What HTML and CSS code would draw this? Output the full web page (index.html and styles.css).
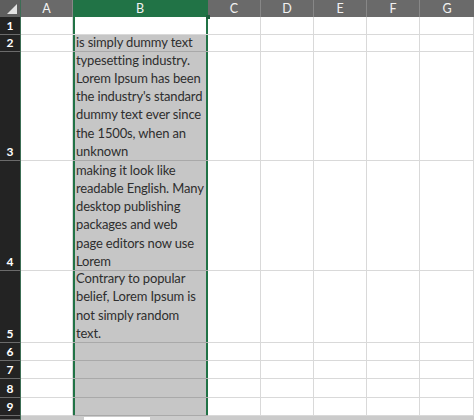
FILE: index.html
```html
<!DOCTYPE html>
<html>
<head>
<meta charset="utf-8">
<link rel="stylesheet" href="styles.css">
</head>
<body>
<div class="sheet">
  <div class="corner"><span class="tri"></span></div>
  <div class="colhead">A</div>
  <div class="colhead sel">B</div>
  <div class="colhead">C</div>
  <div class="colhead">D</div>
  <div class="colhead">E</div>
  <div class="colhead">F</div>
  <div class="colhead last">G</div>

  <div class="rowhead">1</div>
  <div class="cell"></div>
  <div class="cell b active"><span class="handle"></span></div>
  <div class="cell"></div><div class="cell"></div><div class="cell"></div><div class="cell"></div><div class="cell"></div>

  <div class="rowhead">2</div>
  <div class="cell"></div>
  <div class="cell b">is simply dummy text</div>
  <div class="cell"></div><div class="cell"></div><div class="cell"></div><div class="cell"></div><div class="cell"></div>

  <div class="rowhead">3</div>
  <div class="cell"></div>
  <div class="cell b">typesetting industry.<br>Lorem Ipsum has been<br>the industry's standard<br>dummy text ever since<br>the 1500s, when an<br>unknown</div>
  <div class="cell"></div><div class="cell"></div><div class="cell"></div><div class="cell"></div><div class="cell"></div>

  <div class="rowhead">4</div>
  <div class="cell"></div>
  <div class="cell b">making it look like<br>readable English. Many<br>desktop publishing<br>packages and web<br>page editors now use<br>Lorem</div>
  <div class="cell"></div><div class="cell"></div><div class="cell"></div><div class="cell"></div><div class="cell"></div>

  <div class="rowhead">5</div>
  <div class="cell"></div>
  <div class="cell b">Contrary to popular<br>belief, Lorem Ipsum is<br>not simply random<br>text.</div>
  <div class="cell"></div><div class="cell"></div><div class="cell"></div><div class="cell"></div><div class="cell"></div>

  <div class="rowhead">6</div>
  <div class="cell"></div><div class="cell b"></div>
  <div class="cell"></div><div class="cell"></div><div class="cell"></div><div class="cell"></div><div class="cell"></div>

  <div class="rowhead">7</div>
  <div class="cell"></div><div class="cell b"></div>
  <div class="cell"></div><div class="cell"></div><div class="cell"></div><div class="cell"></div><div class="cell"></div>

  <div class="rowhead">8</div>
  <div class="cell"></div><div class="cell b"></div>
  <div class="cell"></div><div class="cell"></div><div class="cell"></div><div class="cell"></div><div class="cell"></div>

  <div class="rowhead">9</div>
  <div class="cell"></div><div class="cell b"></div>
  <div class="cell"></div><div class="cell"></div><div class="cell"></div><div class="cell"></div><div class="cell"></div>

  <div class="rowhead"></div>
  <div class="scrollbar"><span class="thumb"></span></div>
</div>
</body>
</html>
```
FILE: styles.css
```css
html, body {
  margin: 0;
  padding: 0;
  background: #ffffff;
}

.sheet {
  display: grid;
  width: 474px;
  height: 420px;
  grid-template-columns: 21px 52px 135px 53px 53px 53px 53px 1fr;
  grid-template-rows: 17px 18px 17px 109px 110px 72px 18px 18px 19px 18px 1fr;
  font-family: Lato, "Open Sans", sans-serif;
  overflow: hidden;
}

.corner {
  background: #5e5e5e;
  border-right: 1px solid #3c6e55;
  position: relative;
}

.tri {
  position: absolute;
  right: 3px;
  bottom: 3px;
  width: 0;
  height: 0;
  border-left: 10px solid transparent;
  border-bottom: 10px solid #e2e2e2;
}

.colhead {
  background: #6a6a6a;
  color: #f2f2f2;
  font-size: 12.5px;
  display: flex;
  align-items: center;
  justify-content: center;
  border-right: 1px solid #878787;
  box-sizing: border-box;
}

.colhead.sel {
  background: #217346;
  border-right-color: #217346;
}

.colhead.last {
  border-right: none;
}

.rowhead {
  background: #232323;
  color: #ffffff;
  font-size: 12px;
  font-weight: bold;
  display: flex;
  align-items: flex-end;
  justify-content: center;
  padding-bottom: 1px;
  box-sizing: border-box;
  border-bottom: 1px solid #6b6b6b;
  border-right: 1px solid #3c6e55;
}

.cell {
  box-sizing: border-box;
  border-right: 1px solid #d9d9d9;
  border-bottom: 1px solid #d9d9d9;
  background: #ffffff;
}

.cell.b {
  background: #c6c6c6;
  border-right: none;
  border-bottom-color: #a9a9a9;
  box-shadow: inset 2px 0 0 #217346, inset -2px 0 0 #217346;
  color: #2e2e2e;
  font-size: 13px;
  letter-spacing: -0.15px;
  line-height: 18.2px;
  padding: 0 2px 0 3px;
  display: flex;
  align-items: flex-end;
  white-space: nowrap;
  overflow: hidden;
}

.cell.b.active {
  background: #ffffff;
  border-bottom-color: #d9d9d9;
  position: relative;
  overflow: visible;
}

.handle {
  position: absolute;
  right: -2px;
  top: -2px;
  width: 4px;
  height: 4px;
  background: #1f5e3d;
}

.scrollbar {
  grid-column: 2 / 9;
  background: #cbcbcb;
  position: relative;
}

.thumb {
  position: absolute;
  left: 63px;
  top: 1px;
  width: 66px;
  height: 6px;
  background: #ffffff;
}
```
